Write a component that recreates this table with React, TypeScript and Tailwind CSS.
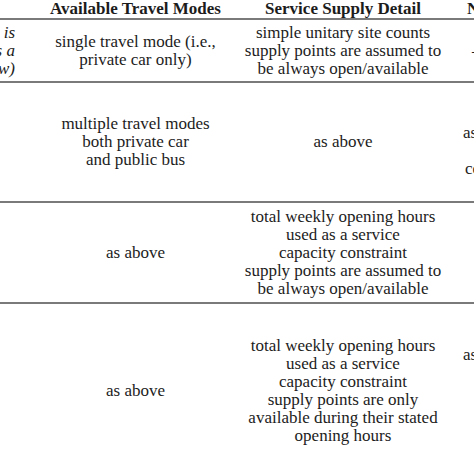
const rule = "border-b-2 border-[#7a7a7a]";
const cols = "grid grid-cols-[139px_213px_202px_146px]";

function Cell({ lines, className = "" }: { lines: string[]; className?: string }) {
  return (
    <div className={"flex flex-col justify-center text-center " + className}>
      {lines.map((l, i) => (
        <div key={i}>{l}</div>
      ))}
    </div>
  );
}

export default function App() {
  return (
    <div className="w-[474px] h-[474px] overflow-hidden bg-white text-[#1c1c1c]">
      <div
        className="ml-[-110px] w-[700px] text-[17px] leading-[18px]"
        style={{ fontFamily: '"Liberation Serif", "Times New Roman", serif' }}
      >
        {/* header */}
        <div className={cols + " h-[20px] items-end pb-[6px] font-bold " + rule}>
          <div />
          <div className="text-center">Available Travel Modes</div>
          <div className="text-center">Service Supply Detail</div>
          <div className="pl-[23px]">Network Detail</div>
        </div>

        {/* row 1 */}
        <div className={cols + " h-[63px] " + rule}>
          <div className="flex flex-col justify-center text-right pr-[14px] italic">
            <div>distance is</div>
            <div>measured as a</div>
            <div>crow)</div>
          </div>
          <Cell lines={["single travel mode (i.e.,", "private car only)"]} />
          <Cell lines={["simple unitary site counts", "supply points are assumed to", "be always open/available"]} />
          <div className="flex flex-col justify-center pl-[28px]">
            <div>–</div>
          </div>
        </div>

        {/* row 2 */}
        <div className={cols + " h-[120px] " + rule}>
          <div />
          <Cell lines={["multiple travel modes", "both private car", "and public bus"]} />
          <Cell lines={["as above"]} />
          <div className="flex flex-col justify-center">
            <div className="pl-[38px]">road network</div>
            <div className="pl-[19px]">as above</div>
            <div className="pl-[38px]">bus routes and</div>
            <div className="pl-[21px]">connections</div>
          </div>
        </div>

        {/* row 3 */}
        <div className={cols + " h-[101px] " + rule}>
          <div />
          <Cell lines={["as above"]} />
          <Cell
            lines={[
              "total weekly opening hours",
              "used as a service",
              "capacity constraint",
              "supply points are assumed to",
              "be always open/available",
            ]}
          />
          <div />
        </div>

        {/* row 4 */}
        <div className={cols + " h-[174px]"}>
          <div />
          <Cell lines={["as above"]} />
          <Cell
            lines={[
              "total weekly opening hours",
              "used as a service",
              "capacity constraint",
              "supply points are only",
              "available during their stated",
              "opening hours",
            ]}
          />
          <div className="flex flex-col justify-center">
            <div className="pl-[19px]">as above</div>
            <div className="pl-[38px]">with timetabled</div>
            <div className="pl-[38px]">bus services</div>
            <div className="pl-[38px]">for each</div>
            <div className="pl-[38px]">weekday</div>
          </div>
        </div>
      </div>
    </div>
  );
}
